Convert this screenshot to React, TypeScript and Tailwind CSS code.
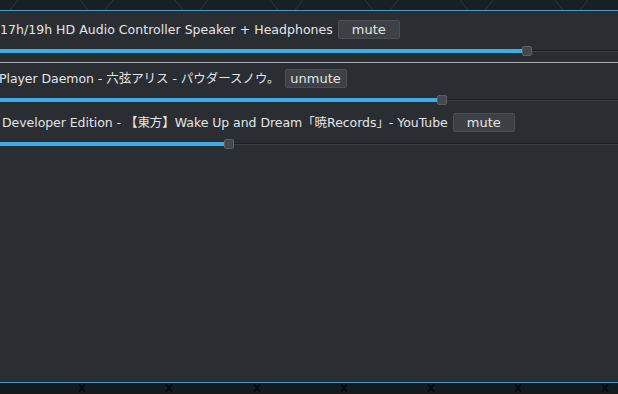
import React from "react";

type Row = { text: string; button: string; value: number; ml: number; pt: string; track: string };

const rows: Row[] = [
  { text: "17h/19h HD Audio Controller Speaker + Headphones", button: "mute", value: 522, ml: 0, pt: "pt-[9px] pb-[6px] border-b border-[#a9acaf]", track: "tracking-[0.03px]" },
  { text: "Player Daemon - 六弦アリス - パウダースノウ。", button: "unmute", value: 437, ml: -1, pt: "pt-[6px]", track: "tracking-[-0.05px]" },
  { text: "Developer Edition - 【東方】Wake Up and Dream「暁Records」- YouTube", button: "mute", value: 224, ml: 2, pt: "pt-[8px]", track: "tracking-[-0.05px]" },
];

function Slider({ value }: { value: number }) {
  return (
    <div className="relative h-[10px] w-full">
      <div className="absolute left-0 right-0 top-[4px] h-[2px] bg-[#1d2023] border-b border-[#3a3e42]" />
      <div className="absolute left-0 top-[3px] h-[4px] bg-[#3daee9]" style={{ width: value }} />
      <div
        className="absolute top-0 h-[10px] w-[10px] rounded-[2px] border border-[#5c6064] bg-[#44484c]"
        style={{ left: value }}
      />
    </div>
  );
}

function Hex() {
  return (
    <svg className="absolute inset-0" width="618" height="10" viewBox="0 0 618 10">
      {[0, 1, 2, 3, 4, 5, 6].map((i) => (
        <g key={i} stroke="#2c363b" strokeWidth="1" fill="none">
          <path d={`M${i * 95 + 10} 10 L${i * 95 + 18} 0`} />
          <path d={`M${i * 95 + 80} 0 L${i * 95 + 88} 10`} />
        </g>
      ))}
    </svg>
  );
}

function Marks() {
  return (
    <svg className="absolute inset-0" width="618" height="11" viewBox="0 0 618 11">
      {[82, 169, 257, 344, 431, 518, 605].map((x) => (
        <g key={x} stroke="#07090a" strokeWidth="1.5">
          <path d={`M${x - 3} 1 L${x + 3} 9`} />
          <path d={`M${x + 3} 1 L${x - 3} 9`} />
        </g>
      ))}
    </svg>
  );
}

export default function App() {
  return (
    <div
      className="w-[618px] h-[394px] overflow-hidden bg-[#182024] flex flex-col text-[#e3e5e7]"
      style={{ fontFamily: '"DejaVu Sans", "Noto Sans CJK JP", sans-serif' }}
    >
      <div className="relative h-[10px] shrink-0">
        <Hex />
      </div>
      <div className="h-[1px] bg-[#4d9cc4] shrink-0" />
      <div className="flex-1 bg-[#2a2e32] flex flex-col">
        {rows.map((r, i) => (
          <div key={i} className={r.pt}>
            <div className="flex items-center h-[19px] gap-[5px] whitespace-pre overflow-hidden">
              <span className={`text-[12.5px] leading-none pt-[1px] ${r.track}`} style={{ marginLeft: r.ml }}>
                {r.text}
              </span>
              <button className="h-[19px] w-[62px] shrink-0 rounded-[2px] border border-[#4b4f53] bg-[#3d4145] text-[13px] leading-none text-[#e3e5e7]">
                {r.button}
              </button>
            </div>
            <div className="mt-[7px]">
              <Slider value={r.value} />
            </div>
          </div>
        ))}
      </div>
      <div className="h-[1px] bg-[#4d9cc4] shrink-0" />
      <div className="relative h-[11px] shrink-0 bg-[#141b1e]">
        <Marks />
      </div>
    </div>
  );
}
